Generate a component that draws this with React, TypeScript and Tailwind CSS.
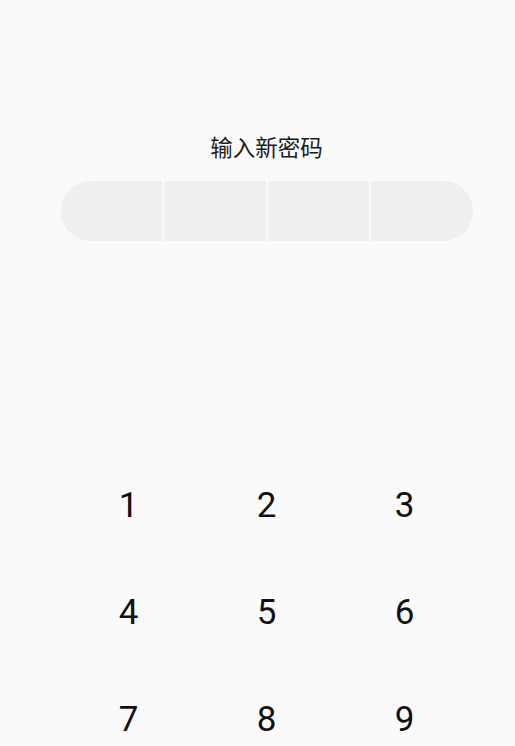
import React from 'react';

const keys = ['1', '2', '3', '4', '5', '6', '7', '8', '9'];

export default function App() {
  return (
    <div className="w-[515px] h-[746px] overflow-hidden bg-[#fafafa] flex flex-col items-center pl-[18px] font-['Roboto','Noto_Sans_CJK_SC',sans-serif]">
      {/* Title */}
      <div className="shrink-0 mt-[131px] h-[30px] leading-[30px] text-[22.5px] text-[#1c1c1c] font-['Noto_Sans_CJK_SC',sans-serif]">
        输入新密码
      </div>

      {/* PIN boxes */}
      <div className="shrink-0 mt-[20px] w-[412px] h-[60px] rounded-full overflow-hidden flex gap-[2px] bg-[#fafafa]">
        <div className="flex-1 bg-[#efefef]" />
        <div className="flex-1 bg-[#efefef]" />
        <div className="flex-1 bg-[#efefef]" />
        <div className="flex-1 bg-[#efefef]" />
      </div>

      {/* Keypad */}
      <div className="shrink-0 mt-[211px] w-[414px] grid grid-cols-3">
        {keys.map((k) => (
          <div
            key={k}
            className="h-[107px] flex items-center justify-center text-[35px] text-[#111] leading-none"
          >
            {k}
          </div>
        ))}
      </div>
    </div>
  );
}
